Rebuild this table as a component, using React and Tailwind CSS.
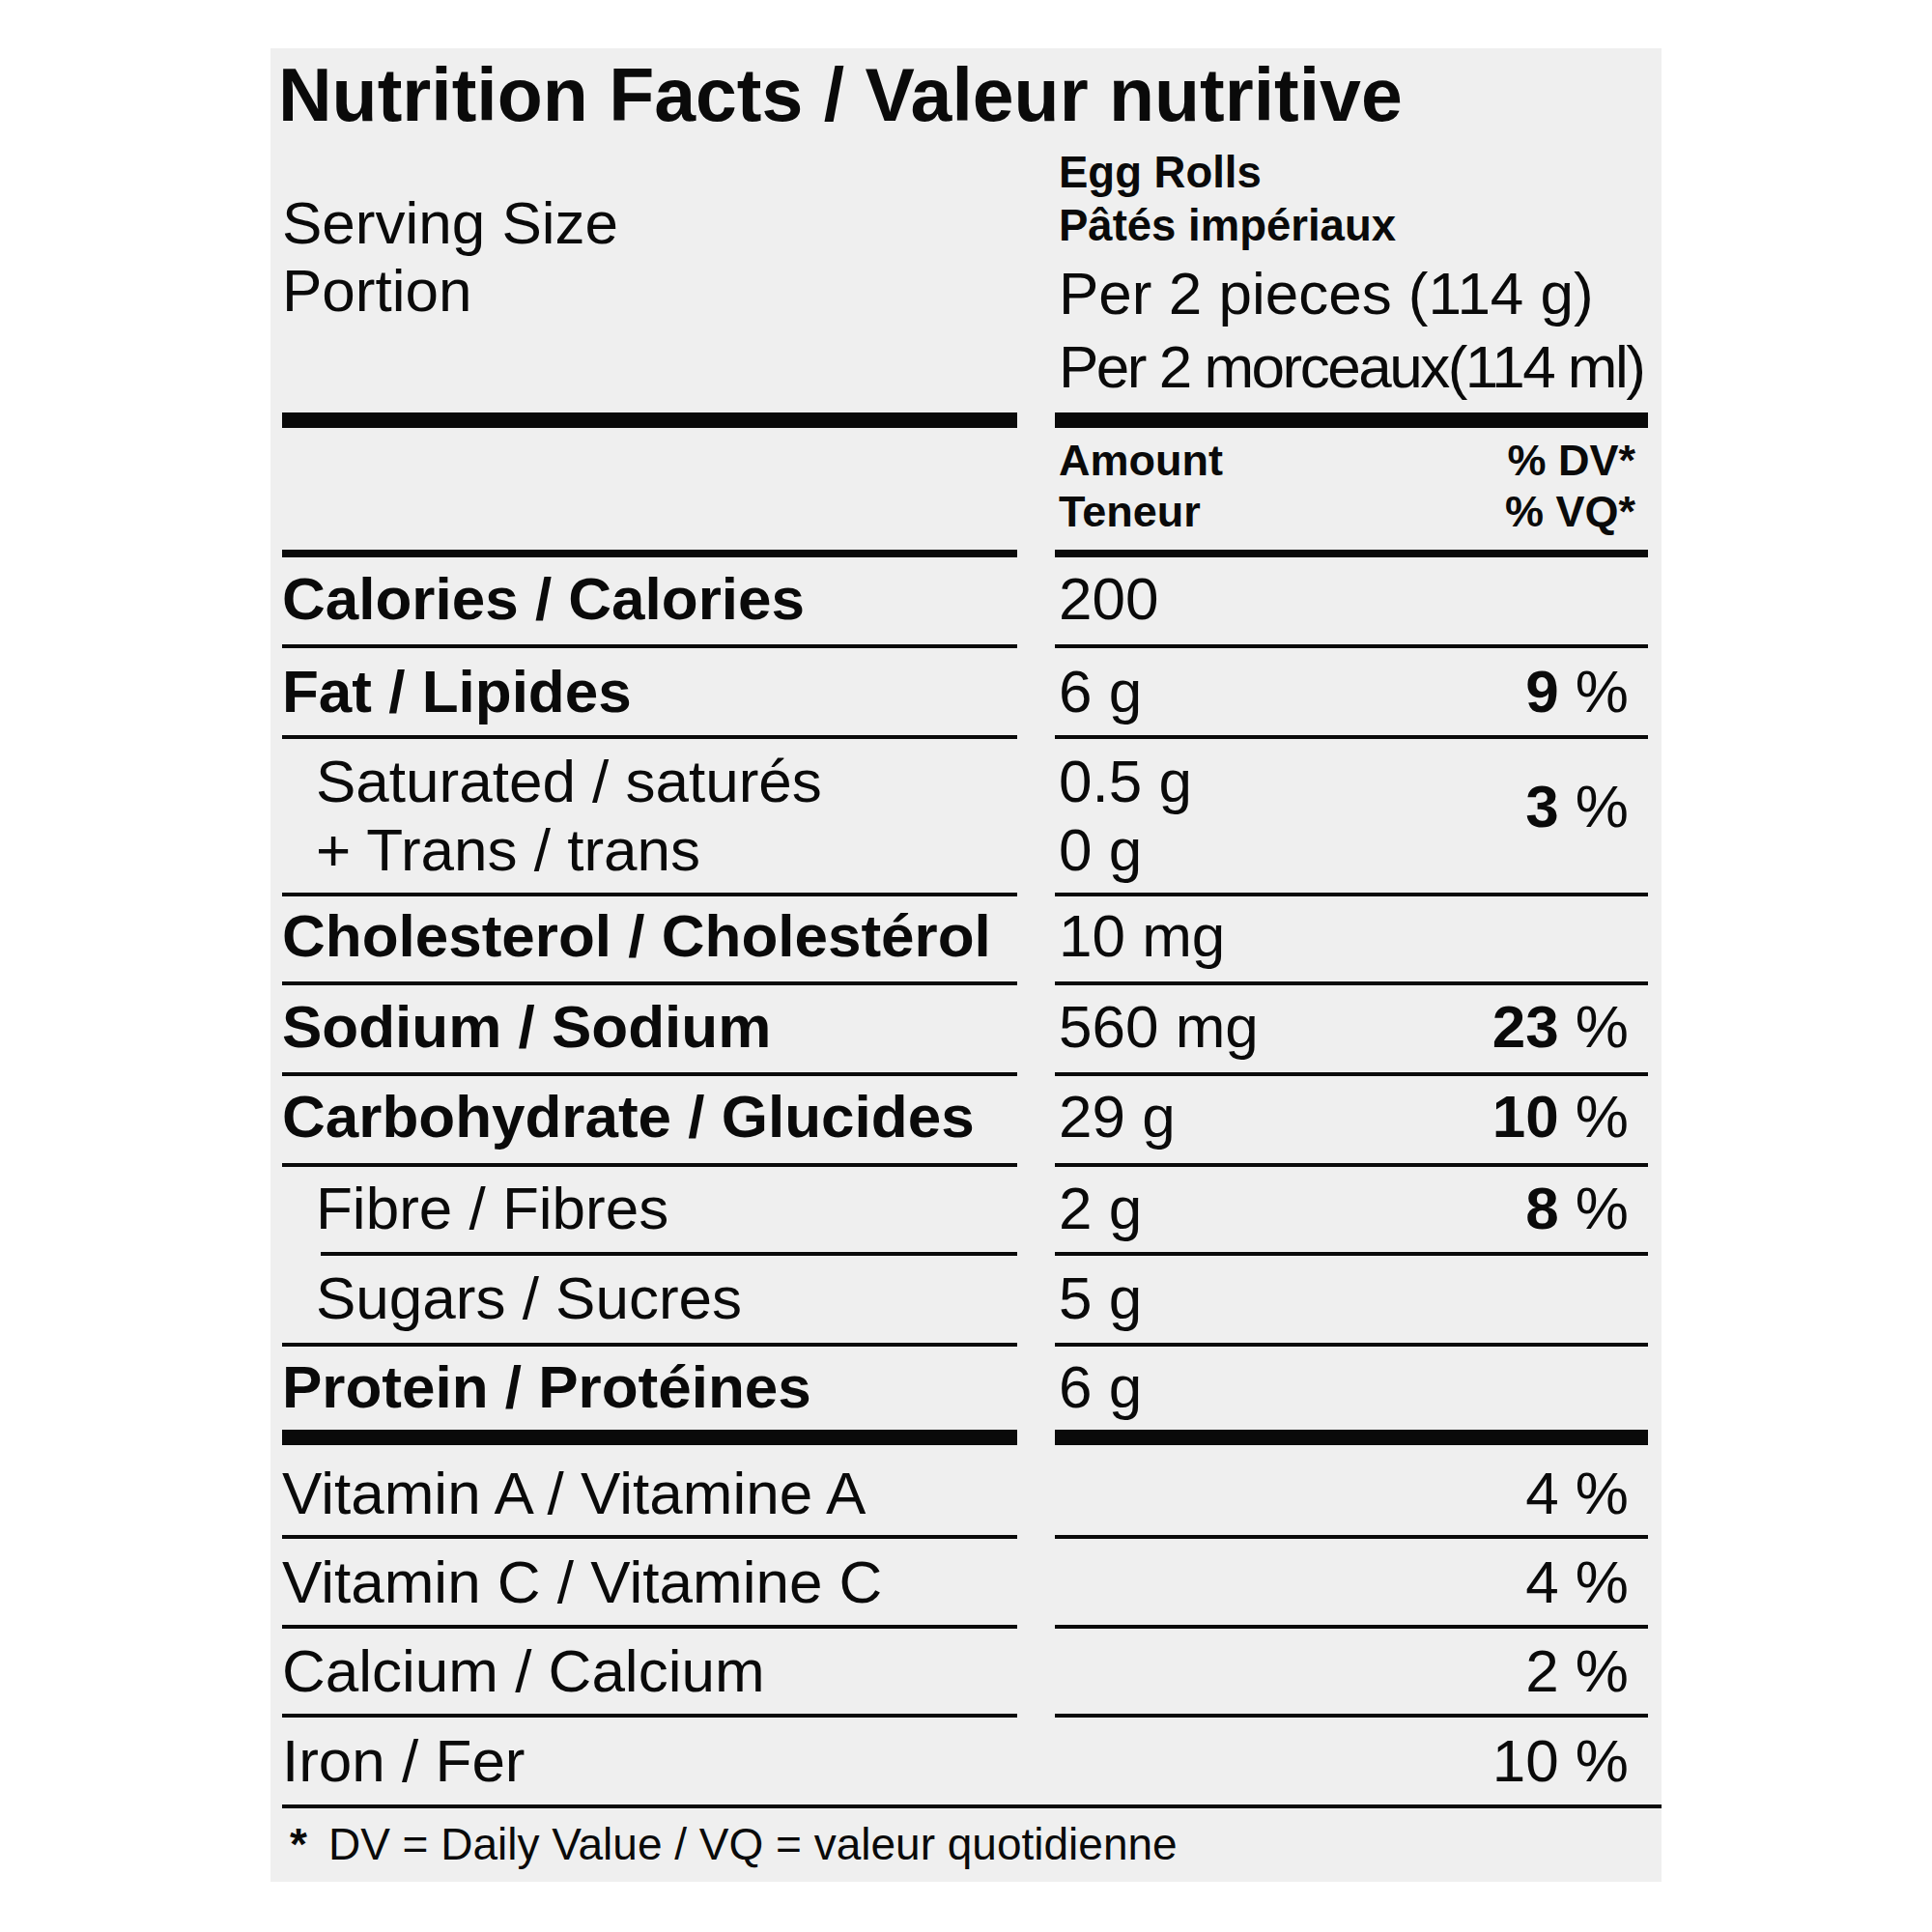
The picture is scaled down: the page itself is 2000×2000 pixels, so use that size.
import React from "react";

function Cell({ h, pt, line = "h-[4px]", lineIndent = "", children, className = "" }) {
  return (
    <div className={`flex flex-col ${h}`}>
      <div className={`flex-1 ${pt} ${className}`}>{children}</div>
      <div className={`${line} bg-[#0a0a0a] ${lineIndent}`} />
    </div>
  );
}

function Pct({ v, bold }) {
  return (
    <span className="whitespace-nowrap">
      <span className={bold ? "font-bold" : ""}>{v}</span>
      <span> %</span>
    </span>
  );
}

function NRow({ h, pt, left, bold, indent, amount, pct, pctBold, line, lineIndent }) {
  return (
    <div className="grid grid-cols-[761px_614px] gap-x-[39px] text-[62px] leading-none">
      <Cell h={h} pt={pt} line={line} lineIndent={lineIndent} className={`${bold ? "font-bold" : ""} ${indent ? "pl-[35px]" : ""} whitespace-nowrap`}>
        {left}
      </Cell>
      <Cell h={h} pt={pt} line={line} className="flex justify-between pl-[4px] pr-[20px]">
        <span>{amount}</span>
        {pct ? <Pct v={pct} bold={pctBold} /> : <span />}
      </Cell>
    </div>
  );
}

export default function App() {
  return (
    <div className="min-h-[2000px] w-[2000px] bg-white pt-[50px] [font-family:'Liberation_Sans',Arial,Helvetica,sans-serif]">
      <div className="ml-[280px] w-[1440px] h-[1898px] bg-[#efefef] pl-[12px] pr-[14px] pt-[10px] text-[#0a0a0a]">
        <div className="-ml-[4px] text-[77px] leading-none font-bold whitespace-nowrap">
          Nutrition Facts / Valeur nutritive
        </div>

        <div className="grid grid-cols-[761px_614px] gap-x-[39px] h-[290px]">
          <div className="pt-[59px] text-[62px] leading-[70px]">
            <div>Serving Size</div>
            <div>Portion</div>
          </div>
          <div className="pl-[4px] pt-[14px]">
            <div className="text-[45.5px] leading-[55px] font-bold">
              <div>Egg Rolls</div>
              <div>Pâtés impériaux</div>
            </div>
            <div className="mt-[5px] text-[62px] leading-[76px]">
              <div className="whitespace-nowrap">Per 2 pieces (114 g)</div>
              <div className="whitespace-nowrap tracking-[-2.5px]">Per 2 morceaux(114 ml)</div>
            </div>
          </div>
        </div>

        <div className="grid grid-cols-[761px_614px] gap-x-[39px]">
          <div className="h-[16px] bg-[#0a0a0a]" />
          <div className="h-[16px] bg-[#0a0a0a]" />
        </div>

        <div className="grid grid-cols-[761px_614px] gap-x-[39px] text-[45px] leading-[53px] font-bold">
          <Cell h="h-[134px]" pt="pt-[7px]" line="h-[8px]"><span /></Cell>
          <Cell h="h-[134px]" pt="pt-[7px]" line="h-[8px]" className="pl-[4px] pr-[13px]">
            <div className="flex justify-between">
              <span>Amount</span>
              <span>% DV*</span>
            </div>
            <div className="flex justify-between">
              <span>Teneur</span>
              <span>% VQ*</span>
            </div>
          </Cell>
        </div>

        <NRow h="h-[94px]" pt="pt-[12px]" left="Calories / Calories" bold amount="200" />
        <NRow h="h-[94px]" pt="pt-[14px]" left="Fat / Lipides" bold amount="6 g" pct="9" pctBold />

        <div className="grid grid-cols-[761px_614px] gap-x-[39px] text-[62px] leading-[71px]">
          <Cell h="h-[163px]" pt="pt-[8px]" className="pl-[35px] whitespace-nowrap">
            <div>Saturated / saturés</div>
            <div>+ Trans / trans</div>
          </Cell>
          <Cell h="h-[163px]" pt="pt-[8px]" className="flex justify-between pl-[4px] pr-[20px]">
            <div>
              <div>0.5 g</div>
              <div>0 g</div>
            </div>
            <div className="pt-[31px] leading-none">
              <Pct v="3" bold />
            </div>
          </Cell>
        </div>

        <NRow h="h-[92px]" pt="pt-[10px]" left="Cholesterol / Cholestérol" bold amount="10 mg" />
        <NRow h="h-[94px]" pt="pt-[12px]" left="Sodium / Sodium" bold amount="560 mg" pct="23" pctBold />
        <NRow h="h-[94px]" pt="pt-[11px]" left="Carbohydrate / Glucides" bold amount="29 g" pct="10" pctBold />
        <NRow h="h-[92px]" pt="pt-[12px]" left="Fibre / Fibres" indent amount="2 g" pct="8" pctBold lineIndent="ml-[40px]" />
        <NRow h="h-[94px]" pt="pt-[13px]" left="Sugars / Sucres" indent amount="5 g" />
        <NRow h="h-[102px]" pt="pt-[11px]" left="Protein / Protéines" bold amount="6 g" line="h-[16px]" />
        <NRow h="h-[97px]" pt="pt-[19px]" left="Vitamin A / Vitamine A" amount="" pct="4" />
        <NRow h="h-[93px]" pt="pt-[14px]" left="Vitamin C / Vitamine C" amount="" pct="4" />
        <NRow h="h-[92px]" pt="pt-[13px]" left="Calcium / Calcium" amount="" pct="2" />

        <div className="-mr-[14px] flex flex-col h-[94px] text-[62px] leading-none">
          <div className="flex-1 pt-[14px] grid grid-cols-[761px_614px] gap-x-[39px]">
            <div>Iron / Fer</div>
            <div className="flex justify-end pr-[20px]">
              <Pct v="10" />
            </div>
          </div>
          <div className="h-[4px] bg-[#0a0a0a]" />
        </div>

        <div className="pt-[14px] pl-[8px] text-[46px] leading-none whitespace-nowrap">
          <span className="font-bold mr-[22px]">*</span>
          <span>DV = Daily Value / VQ = valeur quotidienne</span>
        </div>
      </div>
    </div>
  );
}
